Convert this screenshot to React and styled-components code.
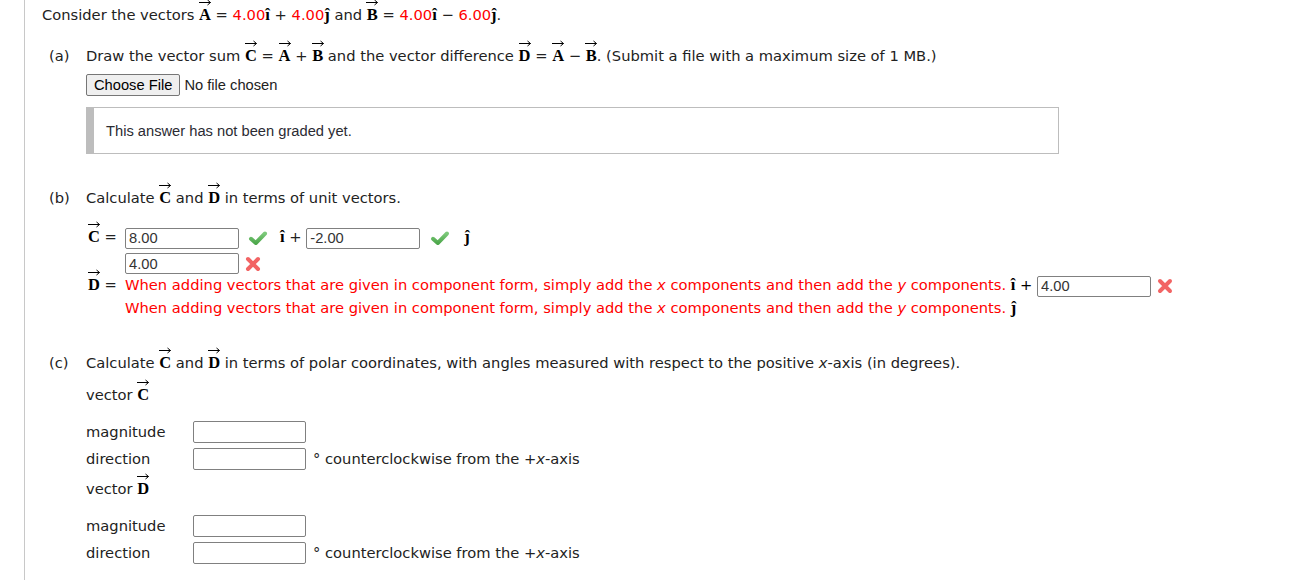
import React from 'react'
import styled, { createGlobalStyle } from 'styled-components'

const Global = createGlobalStyle`
body {
  margin: 0;
  background: #fff;
  font-family: "DejaVu Sans", Verdana, sans-serif;
  font-size: 14.7px;
  color: #222;
}
`

const Page = styled.div`
margin-left: 24px;
border-left: 1px solid #c8c8c8;
min-height: 580px;
padding: 5px 0 0 17px;
box-sizing: border-box;
`

const Intro = styled.div`
line-height: 20px;
`

const Red = styled.span`
color: #f00;
`

const Part = styled.div`
display: grid;
grid-template-columns: 37px 1fr;
margin-top: ${p => p.$top || 0}px;
padding-left: 7px;
`

const PartLabel = styled.div`
line-height: 22px;
`

const PartBody = styled.div`
display: flex;
flex-direction: column;
`

const Line = styled.div`
line-height: 22px;
`

const VecWrap = styled.span`
position: relative;
display: inline-block;
font-family: "Liberation Serif", "Times New Roman", serif;
font-weight: bold;
font-size: 16.5px;
line-height: 1;
color: #000;
`

const Arrow = styled.svg`
position: absolute;
left: 50%;
top: -8px;
transform: translateX(-50%);
`

const Vec = ({ l }) => (
  <VecWrap>
    <Arrow width="13" height="7" viewBox="0 0 13 7">
      <path d="M0.5 3.5H12M9 1L12 3.5L9 6" stroke="#000" strokeWidth="1" fill="none" />
    </Arrow>
    {l}
  </VecWrap>
)

const Unit = styled.span`
font-family: "Liberation Serif", "Times New Roman", serif;
font-weight: bold;
font-size: 16.5px;
color: #000;
`

const Plain = styled.span`
color: #000;
`

const FileRow = styled.div`
display: flex;
align-items: center;
gap: 4px;
margin-top: 7px;
font-family: "Liberation Sans", Arial, sans-serif;
font-size: 14.7px;
color: #222;
`

const FileButton = styled.button`
font-family: "Liberation Sans", Arial, sans-serif;
font-size: 14.7px;
height: 22px;
padding: 0 7px;
background: #efefef;
border: 1px solid #767676;
border-radius: 2px;
color: #000;
`

const Notice = styled.div`
margin-top: 11px;
width: 973px;
height: 47px;
box-sizing: border-box;
border: 1px solid #bdbdbd;
border-left: 8px solid #bdbdbd;
padding-left: 12px;
display: flex;
align-items: center;
font-family: "Liberation Sans", Arial, sans-serif;
font-size: 14.7px;
color: #2b2b33;
`

const AnswerGrid = styled.div`
display: grid;
grid-template-columns: 37px 1fr;
margin-top: 17px;
margin-left: 2px;
`

const Sym = styled.div`
line-height: 22px;
white-space: nowrap;
margin-bottom: ${p => p.$gap || 0}px;
`

const Cell = styled.div`
line-height: 22px;
color: ${p => (p.$red ? '#f00' : 'inherit')};
margin-bottom: ${p => p.$gap || 0}px;
`

const Box = styled.input`
width: 114px;
height: 21px;
box-sizing: border-box;
border: 1px solid #808080;
border-radius: 2px;
padding: 0 3px;
font-family: "Liberation Sans", Arial, sans-serif;
font-size: 14.7px;
color: #333;
vertical-align: middle;
margin: 0;
`

const Mark = styled.svg`
vertical-align: middle;
margin: 0 ${p => p.$right || 10}px 0 ${p => p.$left || 10}px;
`

const Check = props => (
  <Mark width="20" height="16" viewBox="0 0 20 16" {...props}>
    <defs>
      <linearGradient id="ck" x1="0" y1="0" x2="0" y2="1">
        <stop offset="0" stopColor="#7cc97a" />
        <stop offset="1" stopColor="#4ea84c" />
      </linearGradient>
    </defs>
    <path d="M3 8.8L7.8 13L17 3.5" stroke="url(#ck)" strokeWidth="4" strokeLinecap="round" strokeLinejoin="round" fill="none" />
  </Mark>
)

const Cross = props => (
  <Mark width="16" height="16" viewBox="0 0 16 16" {...props}>
    <path d="M3 3L13 13M13 3L3 13" stroke="#f26464" strokeWidth="4" strokeLinecap="round" />
  </Mark>
)

const Polar = styled.div`
display: grid;
grid-template-columns: 107px auto;
align-items: center;
row-gap: 5px;
`

const PolarRow = styled.div`
display: contents;
`

const PolarName = styled.div`
line-height: 21px;
`

const PolarInput = styled.div`
display: flex;
align-items: center;
gap: 7px;
`

const Heading = styled.div`
grid-column: 1 / -1;
line-height: 22px;
margin: ${p => p.$top || 0}px 0 ${p => p.$bottom || 9}px;
`

const Wide = styled(Box)`
width: 113px;
height: 22px;
`

const Deg = styled.span`
font-size: 14.7px;
`

const msg = 'When adding vectors that are given in component form, simply add the '

const Hint = () => (
  <>{msg}<i>x</i> components and then add the <i>y</i> components.</>
)

const PolarBlock = ({ l, top, bottom }) => (
  <>
    <Heading $top={top} $bottom={bottom}>vector <Vec l={l} /></Heading>
    <PolarRow>
      <PolarName>magnitude</PolarName>
      <PolarInput><Wide /></PolarInput>
    </PolarRow>
    <PolarRow>
      <PolarName>direction</PolarName>
      <PolarInput><Wide /><Deg>° counterclockwise from the +<i>x</i>-axis</Deg></PolarInput>
    </PolarRow>
  </>
)

export default function App() {
  return (
    <>
      <Global />
      <Page>
        <Intro>
          Consider the vectors <Vec l="A" /> = <Red>4.00</Red><Unit>î</Unit> + <Red>4.00</Red><Unit>ĵ</Unit> and <Vec l="B" /> = <Red>4.00</Red><Unit>î</Unit> − <Red>6.00</Red><Unit>ĵ</Unit>.
        </Intro>

        <Part $top={20}>
          <PartLabel>(a)</PartLabel>
          <PartBody>
            <Line>
              Draw the vector sum <Vec l="C" /> = <Vec l="A" /> + <Vec l="B" /> and the vector difference <Vec l="D" /> = <Vec l="A" /> − <Vec l="B" />. (Submit a file with a maximum size of 1 MB.)
            </Line>
            <FileRow>
              <FileButton>Choose File</FileButton>
              <span>No file chosen</span>
            </FileRow>
            <Notice>This answer has not been graded yet.</Notice>
          </PartBody>
        </Part>

        <Part $top={33}>
          <PartLabel>(b)</PartLabel>
          <PartBody>
            <Line>Calculate <Vec l="C" /> and <Vec l="D" /> in terms of unit vectors.</Line>
            <AnswerGrid>
              <Sym $gap={3}><Vec l="C" /> =</Sym>
              <Cell $gap={3}>
                <Box defaultValue="8.00" /><Check $left={9} $right={12} />
                <Unit>î</Unit> + <Box defaultValue="-2.00" /><Check $left={10} $right={14} />
                <Unit>ĵ</Unit>
              </Cell>
              <Sym />
              <Cell>
                <Box defaultValue="4.00" /><Cross $left={6} />
              </Cell>
              <Sym><Vec l="D" /> =</Sym>
              <Cell $red>
                <Hint /> <Unit>î</Unit> <Plain>+</Plain> <Box defaultValue="4.00" /><Cross $left={6} />
                <br />
                <Hint /> <Unit>ĵ</Unit>
              </Cell>
            </AnswerGrid>
          </PartBody>
        </Part>

        <Part $top={33}>
          <PartLabel>(c)</PartLabel>
          <PartBody>
            <Line>Calculate <Vec l="C" /> and <Vec l="D" /> in terms of polar coordinates, with angles measured with respect to the positive <i>x</i>-axis (in degrees).</Line>
            <Polar>
              <PolarBlock l="C" top={10} bottom={10} />
              <PolarBlock l="D" top={3} bottom={10} />
            </Polar>
          </PartBody>
        </Part>
      </Page>
    </>
  )
}
